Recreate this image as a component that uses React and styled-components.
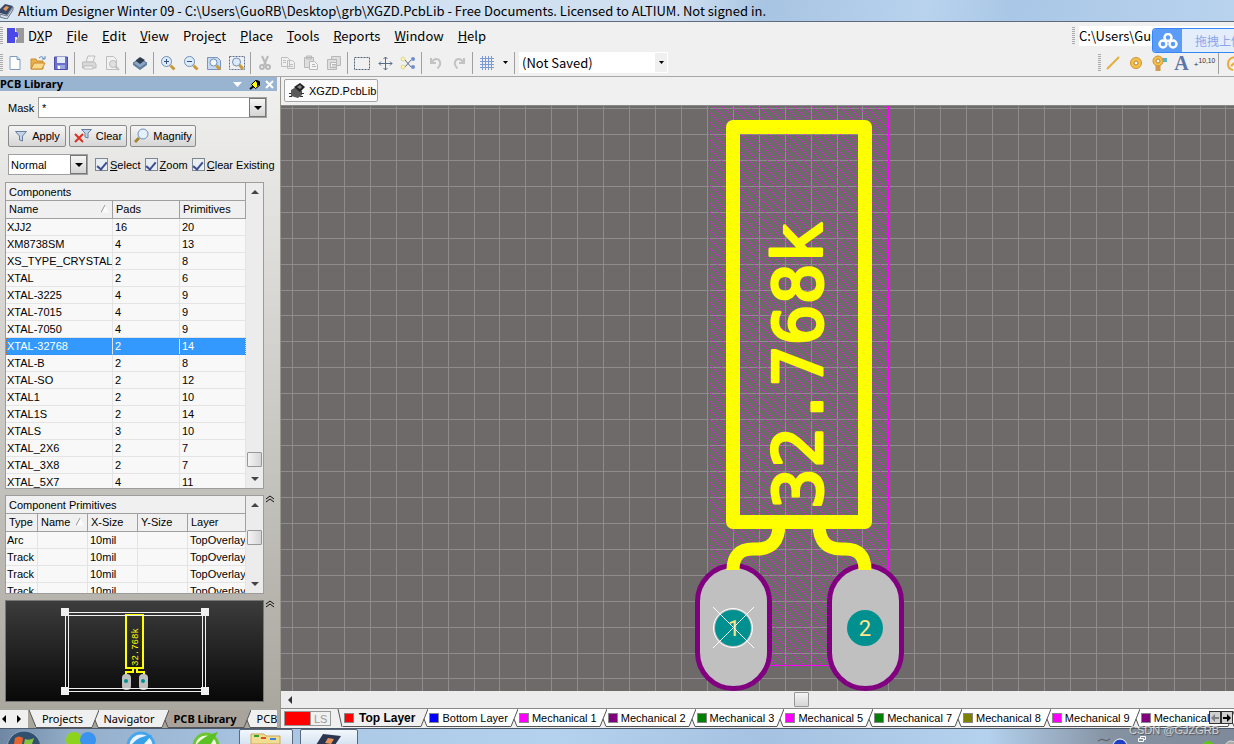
import { Fragment } from 'react';
import styled, { createGlobalStyle, css } from 'styled-components';

const MENUS = [
  ['D', 'X', 'P'],
  ['', 'F', 'ile'],
  ['', 'E', 'dit'],
  ['', 'V', 'iew'],
  ['Proje', 'c', 't'],
  ['', 'P', 'lace'],
  ['', 'T', 'ools'],
  ['', 'R', 'eports'],
  ['', 'W', 'indow'],
  ['', 'H', 'elp'],
];

const COMPONENTS = [
  ['XJJ2', 16, 20],
  ['XM8738SM', 4, 13],
  ['XS_TYPE_CRYSTAL', 2, 8],
  ['XTAL', 2, 6],
  ['XTAL-3225', 4, 9],
  ['XTAL-7015', 4, 9],
  ['XTAL-7050', 4, 9],
  ['XTAL-32768', 2, 14],
  ['XTAL-B', 2, 8],
  ['XTAL-SO', 2, 12],
  ['XTAL1', 2, 10],
  ['XTAL1S', 2, 14],
  ['XTALS', 3, 10],
  ['XTAL_2X6', 2, 7],
  ['XTAL_3X8', 2, 7],
  ['XTAL_5X7', 4, 11],
];

const PRIMITIVES = ['Arc', 'Track', 'Track', 'Track'];

const LAYERS = [
  ['Top Layer', '#ff0000'],
  ['Bottom Layer', '#0000ff'],
  ['Mechanical 1', '#ff00ff'],
  ['Mechanical 2', '#800080'],
  ['Mechanical 3', '#008000'],
  ['Mechanical 5', '#ff00ff'],
  ['Mechanical 7', '#008000'],
  ['Mechanical 8', '#808000'],
  ['Mechanical 9', '#ff00ff'],
  ['Mechanical 10', '#800080'],
];

/* Drawings of the toolbar buttons, on a 16px grid */
const ICONS = {
  new: (
    <>
      <path d="M3 1.5h7l3 3v10H3z" fill="#fff" stroke="#7f9cc0" />
      <path d="M10 1.5v3h3" fill="#c5d8ee" stroke="#7f9cc0" />
    </>
  ),
  open: (
    <>
      <path d="M1 14V4h5l1 2h6v8z" fill="#e9b04e" stroke="#c98b2c" />
      <path d="M1 14l3-6h11l-3 6z" fill="#fbd98a" stroke="#c98b2c" />
      <path d="M9 3q3-3 5 1M12 4h3V1" fill="none" stroke="#5d86bd" />
    </>
  ),
  save: (
    <>
      <path d="M1.500 2h13v12.500h-13z" fill="#6a70cc" stroke="#494fa8" />
      <path d="M4 2h8v6H4z" fill="#e6edfa" />
      <path d="M4 10h8v4H4z" fill="#9aa7e0" />
      <path d="M5 11h2v3H5z" fill="#fff" />
    </>
  ),
  print: (
    <g fill="#f2f2f2" stroke="#bcbcbc">
      <path d="M5 7l2-6h7l-2 6z" />
      <path d="M1.500 7h12l1.500 2v4H1.500z" fill="#d8d8d8" />
      <path d="M3 11h9v3H3z" />
    </g>
  ),
  preview: (
    <g fill="#f2f2f2" stroke="#bdbdbd">
      <path d="M2.500 1.500h7l3 3v10h-10z" />
      <circle cx="9" cy="9" r="3.500" fill="#e0e0e0" />
      <path d="M11.500 11.500l3.500 3.500" strokeWidth="2" />
    </g>
  ),
  chip: (
    <>
      <path d="M1 8l7-4 7 4-7 5z" fill="#8ba6c4" stroke="#5c7691" />
      <path d="M1 8v2l7 5 7-5V8l-7 5z" fill="#5e7d9f" />
      <path d="M3.500 5.500L8 2l5 3-5 4z" fill="#2e3d4e" />
    </>
  ),
  zoomIn: (
    <>
      <circle cx="6.500" cy="6.500" r="5" fill="#dcebfa" stroke="#6f8fb8" />
      <path d="M4 6.500h5M6.500 4v5" stroke="#33507e" />
      <path d="M10.500 10.500l4 4" stroke="#c99a3a" strokeWidth="3" />
    </>
  ),
  zoomOut: (
    <>
      <circle cx="6.500" cy="6.500" r="5" fill="#dcebfa" stroke="#6f8fb8" />
      <path d="M4 6.500h5" stroke="#33507e" />
      <path d="M10.500 10.500l4 4" stroke="#c99a3a" strokeWidth="3" />
    </>
  ),
  zoomFit: (
    <>
      <path d="M1.500 2.500h10l3 3v9h-13z" fill="#c7daf2" stroke="#7895c4" />
      <circle cx="7.500" cy="7.500" r="3.500" fill="#f3f8fd" stroke="#6f8fb8" />
      <path d="M10.500 10.500l3.500 4" stroke="#c99a3a" strokeWidth="3" />
    </>
  ),
  zoomArea: (
    <>
      <path d="M.5 1.500h15v13H.5z" fill="none" stroke="#5b7093" strokeDasharray="2 1" />
      <circle cx="7.500" cy="7" r="4" fill="#dcebfa" stroke="#6f8fb8" />
      <path d="M10.500 10l3.500 4" stroke="#c99a3a" strokeWidth="3" />
    </>
  ),
  cut: (
    <g fill="none" stroke="#b9b9b9" strokeWidth="2">
      <path d="M5 1l4 9M11 1L7 10" />
      <circle cx="5" cy="12" r="2" />
      <circle cx="11" cy="12" r="2" />
    </g>
  ),
  copy: (
    <g fill="#f0f0f0" stroke="#bebebe">
      <path d="M1.500 2.500h6l2 2v7h-8zM7.500 5.500h5l2 2v6h-7z" />
      <path d="M3 5.500h3M3 7.500h3M9 9.500h4M9 11.500h4" />
    </g>
  ),
  paste: (
    <g fill="#dedede" stroke="#b8b8b8">
      <path d="M1.500 2.500h9v10h-9zM3.500 1h5v3h-5z" />
      <path d="M6.500 6.500h5l3 3v5h-8z" fill="#f4f4f4" />
      <path d="M9 9.500h3M9 11.500h4" />
    </g>
  ),
  pasteArray: (
    <g fill="#dedede" stroke="#b8b8b8">
      <path d="M5.500 1.500h9v9h-9z" />
      <path d="M1.500 4.500h9v10h-9z" />
      <path d="M4.500 7.500h6v5h-6z" fill="#f4f4f4" />
      <path d="M6 9.500h4M6 11h4" />
    </g>
  ),
  select: <path d="M.5 2.500h15v12H.5z" fill="none" stroke="#4f6076" strokeDasharray="2 1" />,
  move: <path d="M8.500 2v13M2 8.500h13M6.500 4l2-2 2 2M6.500 13l2 2 2-2M4 6.500l-2 2 2 2M13 6.500l2 2-2 2" fill="none" stroke="#5b6c86" />,
  deselect: (
    <>
      <path d="M5 5l6 7M5 12l6-7" stroke="#5b6c86" />
      <circle cx="3" cy="4" r="2" fill="#fdf6b4" stroke="#ddd58a" />
      <circle cx="3" cy="12" r="2" fill="#fdf6b4" stroke="#ddd58a" />
      <circle cx="13" cy="4" r="2" fill="#6d8fd0" />
      <circle cx="13" cy="12" r="2" fill="#6d8fd0" />
    </>
  ),
  undo: <path d="M3 3v5h5M3.500 7.500q3-5 7-3 4 4-1 9" fill="none" stroke="#c2c2c2" strokeWidth="2" />,
  redo: <path d="M13 3v5H8M12.500 7.500q-3-5-7-3-4 4 1 9" fill="none" stroke="#c2c2c2" strokeWidth="2" />,
  grid: <path d="M1 3.500h14M1 6.500h14M1 9.500h14M1 12.500h14M3.500 1v14M6.500 1v14M9.500 1v14M12.500 1v14" stroke="#7b9ad6" />,
  line: <path d="M2 14L14 2" stroke="#e6ae3a" strokeWidth="2" />,
  pad: (
    <>
      <circle cx="8" cy="8" r="5.500" fill="#f6c04b" stroke="#cc9433" />
      <circle cx="8" cy="8" r="2" fill="#fff" stroke="#b9822d" />
    </>
  ),
  via: (
    <>
      <path d="M8 3h8v4H8z" fill="#58b4cf" />
      <path d="M4.500 9h5v7h-5z" fill="#d49a4b" />
      <circle cx="7" cy="6" r="5" fill="#f6c04b" stroke="#cc9433" />
      <circle cx="7" cy="6" r="2" fill="#fff" stroke="#b9822d" />
    </>
  ),
  arc: <path d="M15 2Q3 1 3 9q0 5 5 6M6 11l8-7" fill="none" stroke="#eda93a" strokeWidth="2" />,
};

const TOOLS = [
  ['new', 'open', 'save'],
  ['print', 'preview'],
  ['chip'],
  ['zoomIn', 'zoomOut', 'zoomFit', 'zoomArea'],
  ['cut', 'copy', 'paste', 'pasteArray'],
  ['select', 'move', 'deselect'],
  ['undo', 'redo'],
];

function Icon({ name }) {
  return (
    <svg width="16" height="16" viewBox="0 0 16 16" aria-hidden="true">
      {ICONS[name]}
    </svg>
  );
}

function Caret({ up, color = '#000' }) {
  return (
    <svg width="8" height="4" viewBox="0 0 8 4" aria-hidden="true">
      <path d={up ? 'M0 4l4-4 4 4z' : 'M0 0l4 4 4-4z'} fill={color} />
    </svg>
  );
}

function SmallCaret() {
  return (
    <svg width="5" height="3" viewBox="0 0 5 3" aria-hidden="true">
      <path d="M0 0h5L2.500 3z" fill="#000" />
    </svg>
  );
}

/* The slanted edge shared by two neighbouring tabs */
function Slant({ left, right }) {
  return (
    <SlantSvg viewBox="0 0 10 18" aria-hidden="true">
      <path d="M0 0h10L3 18H0z" fill={left} />
      <path d="M10 0v18H9L6 10z" fill={right} />
      <path d="M10 0L3 17.500H0M6 10l3 7.500h1" fill="none" stroke="#555" />
    </SlantSvg>
  );
}

function Sort() {
  return (
    <SortSvg viewBox="0 0 8 8" aria-hidden="true">
      <path d="M0 7.500L4 0l4 7.500z" fill="#fafafa" />
      <path d="M0 7.500L4 0" stroke="#999" />
    </SortSvg>
  );
}

function Collapse() {
  return (
    <svg width="10" height="8" viewBox="0 0 10 8" aria-hidden="true">
      <path d="M1 4l4-3 4 3M1 7l4-3 4 3" fill="none" stroke="#111" />
    </svg>
  );
}

function Scroller({ thumbTop }) {
  return (
    <ScrollTrack>
      <Caret up color="#444" />
      <ScrollThumb $top={thumbTop} />
      <ScrollEnd>
        <Caret color="#444" />
      </ScrollEnd>
    </ScrollTrack>
  );
}

function LibraryPanel() {
  return (
    <Panel>
      <PanelHeader>
        <PanelTitle>PCB Library</PanelTitle>
        <svg width="42" height="13" viewBox="0 0 42 13" aria-hidden="true">
          <path d="M1 4h9L5.500 9z" fill="#fff" />
          <path d="M18 11l4-3" stroke="#000" strokeWidth="2" />
          <path d="M19.500 6.500l4-4 4 1v4l-4 3z" fill="#ff0" stroke="#000" />
          <path d="M23 2l4 1v4l-2 2v-4z" fill="#000" />
          <path d="M34 3l7 7M41 3l-7 7" stroke="#fff" strokeWidth="2" />
        </svg>
      </PanelHeader>
      <PanelBody>
        <Row>
          <Label htmlFor="mask">Mask</Label>
          <MaskBox>
            <MaskInput id="mask" defaultValue="*" />
            <DropButton aria-label="Mask history">
              <Caret />
            </DropButton>
          </MaskBox>
        </Row>
        <ButtonRow>
          <PushButton $wide={58}>
            <svg width="14" height="14" viewBox="0 0 14 14" aria-hidden="true">
              <path d="M1.500 2.500h11L8.500 7v5l-3-1V7z" fill="#c3d3e8" stroke="#667f9f" />
            </svg>
            Apply
          </PushButton>
          <PushButton $wide={58}>
            <svg width="18" height="16" viewBox="0 0 18 16" aria-hidden="true">
              <path d="M7.500 1.500h10L14 5v5l-3-1V5z" fill="#c3d3e8" stroke="#667f9f" />
              <path d="M1 6l8 8M9 6l-8 8" stroke="#e02f1e" strokeWidth="2" />
            </svg>
            Clear
          </PushButton>
          <PushButton $wide={66}>
            <svg width="15" height="16" viewBox="0 0 15 16" aria-hidden="true">
              <path d="M5 10l-4 4" stroke="#a8842c" strokeWidth="3" />
              <circle cx="9" cy="6" r="5" fill="#e4f1fb" stroke="#7090bd" />
            </svg>
            Magnify
          </PushButton>
        </ButtonRow>
        <Row>
          <ModeBox>
            <ModeSelect aria-label="Filter mode">
              <option>Normal</option>
            </ModeSelect>
            <DropFace>
              <Caret />
            </DropFace>
          </ModeBox>
          {[
            ['S', 'elect'],
            ['Z', 'oom'],
            ['C', 'lear Existing'],
          ].map(([key, rest]) => (
            <Check key={rest}>
              <CheckInput type="checkbox" defaultChecked />
              <span>
                <u>{key}</u>
                {rest}
              </span>
            </Check>
          ))}
        </Row>
      </PanelBody>

      <ListBox $grow>
        <ListMain>
          <Caption>Components</Caption>
          <Table>
            <colgroup>
              <Col $width={107} />
              <Col $width={67} />
              <col />
            </colgroup>
            <thead>
              <tr>
                <Th>
                  Name
                  <Sort />
                </Th>
                <Th>Pads</Th>
                <Th>Primitives</Th>
              </tr>
            </thead>
            <tbody>
              {COMPONENTS.map(([name, pads, primitives]) => (
                <Tr key={name} $selected={name === 'XTAL-32768'}>
                  <Td>{name}</Td>
                  <Td>{pads}</Td>
                  <Td>{primitives}</Td>
                </Tr>
              ))}
            </tbody>
          </Table>
        </ListMain>
        <Scroller thumbTop={258} />
      </ListBox>

      <Section>
        <ListBox $height={99}>
          <ListMain>
            <Caption>Component Primitives</Caption>
            <Table>
              <colgroup>
                <Col $width={32} />
                <Col $width={50} />
                <Col $width={50} />
                <Col $width={50} />
                <col />
              </colgroup>
              <thead>
                <tr>
                  <Th>Type</Th>
                  <Th>
                    Name
                    <Sort />
                  </Th>
                  <Th>X-Size</Th>
                  <Th>Y-Size</Th>
                  <Th>Layer</Th>
                </tr>
              </thead>
              <tbody>
                {PRIMITIVES.map((type, i) => (
                  <Tr key={i}>
                    <Td>{type}</Td>
                    <Td />
                    <Td>10mil</Td>
                    <Td />
                    <Td>TopOverlay</Td>
                  </Tr>
                ))}
              </tbody>
            </Table>
          </ListMain>
          <Scroller thumbTop={23} />
        </ListBox>
        <Collapse />
      </Section>

      <Section>
        <Preview>
          <svg width="257" height="101" viewBox="0 0 257 101" aria-hidden="true">
            <g fill="none" stroke="#ff0" strokeWidth="2">
              <path d="M120 14h17v53h-17z" />
              <path d="M127 67v4h-7v4M131 67v4h7v4" />
            </g>
            <g fill="#c0c0c0">
              <rect x="116" y="73" width="9" height="16" rx="4" />
              <rect x="133" y="73" width="9" height="16" rx="4" />
            </g>
            <circle cx="120" cy="80" r="2" fill="#009090" />
            <circle cx="137" cy="80" r="2" fill="#009090" />
            <PreviewText transform="translate(132 65) rotate(-90)">32.768k</PreviewText>
            <path
              d="M59.500 11.500h140v79h-140zM62.500 14.500h134v73h-134z"
              fill="none"
              stroke="#f0f0f0"
            />
            <path d="M55 7h8v8h-8zM195 7h8v8h-8zM55 86h8v8h-8zM195 86h8v8h-8z" fill="#f0f0f0" />
          </svg>
        </Preview>
        <Collapse />
      </Section>

      <PanelTabs>
        <TabArrows>
          <svg width="24" height="8" viewBox="0 0 24 8" aria-hidden="true">
            <path d="M6 0v8L2 4zM17 0v8l4-4z" fill="#000" />
          </svg>
        </TabArrows>
        <svg width="8" height="17" viewBox="0 0 8 17" aria-hidden="true">
          <path d="M1 0l7 17V0z" fill="#f0f0f0" />
          <path d="M1 0l7 17" stroke="#555" />
        </svg>
        <PanelTab $width={53}>Projects</PanelTab>
        <Slant left="#f0f0f0" right="#f0f0f0" />
        <PanelTab $width={60}>Navigator</PanelTab>
        <Slant left="#f0f0f0" right="#a9a39b" />
        <PanelTab $width={72} $active>
          PCB Library
        </PanelTab>
        <Slant left="#a9a39b" right="#f0f0f0" />
        <PanelTab $width={32}>PCB</PanelTab>
      </PanelTabs>
    </Panel>
  );
}

// keep-out hatching of the body area, one 45 degree stroke every 9px
const HATCH = Array.from({ length: 84 }, (_, i) => `M428.500 ${i * 9 - 183.5}l180 180`).join('');

function Board() {
  // snap the 25.93px grid to whole pixels so that the lines stay crisp
  const step = (first, i) => Math.round(first + i * 25.93) + 0.5;
  return (
    <BoardSvg role="img" aria-label="XTAL-32768 footprint">
      <defs>
        <clipPath id="body">
          <rect x="428" y="0" width="180" height="559" />
        </clipPath>
      </defs>
      <g stroke="#8f8c90" shapeRendering="crispEdges">
        {Array.from({ length: 80 }, (_, i) => (
          <line key={`v${i}`} x1={step(11, i)} x2={step(11, i)} y1="0" y2="100%" />
        ))}
        {Array.from({ length: 50 }, (_, i) => (
          <line key={`h${i}`} y1={step(2, i)} y2={step(2, i)} x1="0" x2="100%" />
        ))}
      </g>

      <g fill="none" stroke="#ff00ff" shapeRendering="crispEdges">
        <path d={HATCH} clipPath="url(#body)" strokeWidth="0.7" />
        <path d="M428.500 0v559.500H608" />
        <path d="M608 0v559" strokeWidth="2" />
      </g>

      <g fill="#c0c0c0" stroke="#800080" strokeWidth="5">
        <rect x="416.500" y="459.500" width="72" height="123" rx="36" />
        <rect x="548.500" y="459.500" width="72" height="123" rx="36" />
      </g>
      <g fill="none" stroke="#ff0" strokeWidth="14" strokeLinejoin="round">
        <path d="M452 21h132v395H452z" />
        <path d="M498 418q0 25-22 25h-4q-20 0-20 21" strokeWidth="13" />
        <path d="M538 418q0 25 22 25h4q20 0 20 21" strokeWidth="13" />
      </g>
      <FootprintText transform="translate(541 403) rotate(-90)">32.768k</FootprintText>

      <circle cx="452" cy="522" r="18" fill="#009090" />
      <circle cx="584" cy="522" r="18" fill="#009090" />
      <PadText x="453" y="530">
        1
      </PadText>
      <PadText x="584" y="530">
        2
      </PadText>
      <g fill="none" stroke="#fff">
        <circle cx="452" cy="522" r="19.500" />
        <path d="M432 501l41 41M473 501l-41 41" />
      </g>
    </BoardSvg>
  );
}

export default function App() {
  return (
    <Shell>
      <GlobalStyle />
      <TitleBar>
        <svg width="14" height="16" viewBox="0 0 14 16" aria-hidden="true">
          <path d="M0 6l5-5 8 2-6 9-7-2z" fill="#3b4868" />
          <path d="M3 6l3-3 3 1-3 4z" fill="#e69a5c" />
          <path d="M0 11l7 2 6-9v3l-6 9-7-2z" fill="#d8dfe8" stroke="#66748a" />
        </svg>
        <Title>
          Altium Designer Winter 09 - C:\Users\GuoRB\Desktop\grb\XGZD.PcbLib - Free
          Documents. Licensed to ALTIUM. Not signed in.
        </Title>
      </TitleBar>

      <MenuBar>
        <Grip $space={4} />
        <svg width="17" height="15" viewBox="0 0 17 15" aria-hidden="true">
          <path d="M0 0h8v4h2v-1q3 4 0 8V9H8v6H0z" fill="#4a48e8" />
          <path d="M9 0h8v15H9v-3q6-4 0-9z" fill="#9a9a9a" />
        </svg>
        <MenuList>
          {MENUS.map(([pre, key, post]) => (
            <MenuItem key={pre + key + post}>
              {pre}
              <u>{key}</u>
              {post}
            </MenuItem>
          ))}
        </MenuList>
        <PathGroup>
          <Grip $space={4} />
          <PathInput aria-label="Document path" defaultValue="C:\Users\GuoRB\Desktop" />
        </PathGroup>
      </MenuBar>

      <ToolBar>
        <Grip />
        {TOOLS.map((group) => (
          <Fragment key={group[0]}>
            {group.map((name) => (
              <Tool key={name} aria-label={name}>
                <Icon name={name} />
              </Tool>
            ))}
            <Divider />
          </Fragment>
        ))}
        <Tool aria-label="grid">
          <Icon name="grid" />
        </Tool>
        <Tool $narrow aria-label="grid menu">
          <SmallCaret />
        </Tool>
        <Divider />
        <SavedBox>
          <SavedSelect aria-label="Saved view">
            <option>(Not Saved)</option>
          </SavedSelect>
          <SavedArrow>
            <SmallCaret />
          </SavedArrow>
        </SavedBox>
        <DrawTools>
          <Grip />
          {['line', 'pad', 'via'].map((name) => (
            <Tool key={name} aria-label={name}>
              <Icon name={name} />
            </Tool>
          ))}
          <Tool aria-label="text">
            <Letter>A</Letter>
          </Tool>
          <Tool aria-label="coordinate">
            <Coordinate>
              +<sup>10,10</sup>
            </Coordinate>
          </Tool>
          <Divider />
          <Tool aria-label="arc">
            <Icon name="arc" />
          </Tool>
        </DrawTools>
      </ToolBar>

      <Work>
        <LibraryPanel />
        <Editor>
          <DocBar>
            <DocTab>
              <svg width="17" height="16" viewBox="0 0 17 16" aria-hidden="true">
                <path d="M2 7l5-3 6 4v4l-4 3-7-2z" fill="#5a5a5a" />
                <path d="M5 4l6-4 5 4-5 5z" fill="#222" />
                <path d="M8 4l3-2 2 2-2 2z" fill="#888" />
                <path d="M0 10.500h2M0 13.500h3M12 10.500h3M11 13.500h3" stroke="#333" />
              </svg>
              XGZD.PcbLib
            </DocTab>
          </DocBar>
          <Board />
          <HScroll>
            <svg width="5" height="8" viewBox="0 0 5 8" aria-hidden="true">
              <path d="M5 0v8L1 4z" fill="#333" />
            </svg>
            <HThumb />
          </HScroll>
          <LayerBar>
            <LayerSet>
              <LayerColor />
              LS
            </LayerSet>
            <svg width="6" height="19" viewBox="0 0 6 19" aria-hidden="true">
              <path d="M1 0l4 18" stroke="#555" />
            </svg>
            {LAYERS.map(([name, color], i) => (
              <Fragment key={name}>
                <LayerTab $active={i === 0}>
                  <Swatch $color={color} />
                  {name}
                </LayerTab>
                <Slant left={i === 0 ? '#f0f0f0' : '#fff'} right="#fff" />
              </Fragment>
            ))}
            <LayerNav>
              <NavButton aria-label="Previous layers" disabled>
                <svg width="8" height="8" viewBox="0 0 8 8">
                  <path d="M0 4l4-4v3h4v2H4v3z" fill="#808080" />
                </svg>
              </NavButton>
              <NavButton aria-label="Next layers">
                <svg width="8" height="8" viewBox="0 0 8 8">
                  <path d="M8 4L4 0v3H0v2h4v3z" fill="#000" />
                </svg>
              </NavButton>
            </LayerNav>
          </LayerBar>
        </Editor>
      </Work>

      <TaskBar>
        <svg width="232" height="15" viewBox="0 0 232 15" aria-hidden="true">
          <circle cx="24" cy="19" r="17" fill="#31506f" stroke="#8fa9c4" />
          <path d="M15 9q4-3 8 0l-1 6h-8z" fill="#e8632c" />
          <path d="M25 10q4 2 9-1l-2 6h-8z" fill="#86c440" />
          <circle cx="74" cy="11" r="8" fill="#8dd31c" />
          <circle cx="88" cy="11" r="8" fill="#3a93ee" />
          <circle cx="141" cy="17" r="13" fill="#eaf5ff" stroke="#4aa6ea" strokeWidth="3" />
          <path d="M132 15q6-8 20-9l-8 9z" fill="#37a0ea" />
          <circle cx="206" cy="17" r="12" fill="#f2fbe8" stroke="#6cc531" strokeWidth="3" />
          <path d="M197 15q6-8 21-12l-7 12z" fill="#5bc022" />
        </svg>
        <TaskButton aria-label="Explorer" $width={54}>
          <svg width="32" height="11" viewBox="0 0 32 11" aria-hidden="true">
            <path d="M1 1h13l2 2h14v8H1z" fill="#f2dc92" stroke="#c7a956" />
            <path d="M4 2h5v2H4z" fill="#2aa52a" />
            <path d="M11 4h5v2h-5z" fill="#e04a2a" />
            <path d="M20 5h6v2h-6z" fill="#3584d4" />
          </svg>
        </TaskButton>
        <TaskButton aria-label="Altium Designer" $width={58}>
          <svg width="28" height="12" viewBox="0 0 28 12" aria-hidden="true">
            <path d="M8 1l18 2-6 9H1z" fill="#2c3550" />
            <path d="M13 5l6 1-3 5-6-1z" fill="#e8935a" />
          </svg>
        </TaskButton>
        <Tray width="140" height="15" viewBox="0 0 140 15" aria-hidden="true">
          <path d="M4 12q4-3 6-1t6-1" fill="none" stroke="#555" />
          <circle cx="26" cy="17" r="7" fill="#1d3fc4" stroke="#fff" />
          <path d="M44.500 12.500v-3h5v3zM46.500 9.500v-2h5v3h-2" fill="none" stroke="#fff" />
          <circle cx="114" cy="18" r="6" fill="#63c51c" />
          <circle cx="137" cy="18" r="6" fill="#aaa" stroke="#ddd" />
        </Tray>
      </TaskBar>

      <UploadPill>
        <PillLogo>
          <svg width="20" height="16" viewBox="0 0 20 16" aria-hidden="true">
            <g fill="none" stroke="#fff" strokeWidth="2.500">
              <circle cx="10" cy="4.500" r="3.500" />
              <circle cx="5" cy="11" r="3.500" />
              <circle cx="15" cy="11" r="3.500" />
            </g>
          </svg>
        </PillLogo>
        <PillText>拖拽上传</PillText>
      </UploadPill>
      <Watermark>CSDN @GJZGRB</Watermark>
    </Shell>
  );
}

const GlobalStyle = createGlobalStyle`
  * {
    box-sizing: border-box;
  }

  body {
    margin: 0;
    overflow: hidden;
    color: #000;
    font: 11px/16px 'Liberation Sans', Arial, sans-serif;
  }

  button, input, select {
    margin: 0;
    padding: 0;
    border: 0;
    border-radius: 0;
    color: inherit;
    font: inherit;
  }

  svg {
    display: block;
    flex: none;
  }
`;

const uiFont = css`
  font-family: 'Noto Sans', 'Open Sans', sans-serif;
`;

const menuFont = css`
  font-family: 'Noto Sans CJK SC', 'Noto Sans', sans-serif;
  font-size: 13px;
`;

const Shell = styled.div`
  position: relative;
  display: flex;
  flex-direction: column;
  height: 100vh;
  overflow: hidden;
  background: #f0f0f0;
`;

const TitleBar = styled.header`
  display: flex;
  align-items: center;
  gap: 4px;
  height: 22px;
  flex: none;
  border-bottom: 1px solid #5f6b7c;
  background: linear-gradient(100deg, #d9e6f3 0%, #cfdff0 55%, #a7c4e2 62%, #b9d3ee 75%, #a9c7e6 82%, #b9d3ee 100%);
`;

const Title = styled.h1`
  ${menuFont}
  margin: 0;
  font-weight: 400;
  white-space: nowrap;
`;

const MenuBar = styled.nav`
  display: flex;
  align-items: center;
  height: 27px;
  flex: none;
`;

const Grip = styled.span`
  width: 3px;
  height: 17px;
  margin-right: ${({ $space = 0 }) => $space}px;
  flex: none;
  background: repeating-linear-gradient(#aaa 0 1px, transparent 1px 2px);
`;

const MenuList = styled.div`
  display: flex;
  gap: 14px;
  margin-left: 4px;
`;

const MenuItem = styled.button`
  ${menuFont}
  background: none;
  white-space: nowrap;
`;

const PathGroup = styled.div`
  display: flex;
  align-items: center;
  width: 162px;
  margin-left: auto;
`;

const PathInput = styled.input`
  ${menuFont}
  flex: 1;
  min-width: 0;
  height: 20px;
  background: #fff;
`;

const ToolBar = styled.div`
  display: flex;
  align-items: center;
  height: 28px;
  flex: none;
  border-bottom: 1px solid #a8a8a8;
`;

const Tool = styled.button`
  display: flex;
  align-items: center;
  justify-content: center;
  width: ${({ $narrow }) => ($narrow ? 14 : 23)}px;
  height: 22px;
  flex: none;
  background: none;
`;

const Divider = styled.span`
  width: 1px;
  height: 22px;
  margin: 0 2px;
  flex: none;
  background: #a0a0a0;
`;

const SavedBox = styled.div`
  display: flex;
  width: 149px;
  height: 21px;
  margin-left: 2px;
  background: #fff;
`;

const SavedSelect = styled.select`
  ${menuFont}
  flex: 1;
  padding-left: 3px;
  appearance: none;
  background: none;
`;

const SavedArrow = styled.span`
  display: flex;
  align-items: center;
  justify-content: center;
  width: 12px;
  margin: 1px;
  background: #f0f0f0;
`;

const DrawTools = styled.div`
  display: flex;
  align-items: center;
  width: 136px;
  margin-left: auto;
  overflow: hidden;
`;

const Letter = styled.span`
  color: #5d74a8;
  font: 700 20px/20px 'Liberation Serif', serif;
`;

const Coordinate = styled.span`
  color: #333;
  font-size: 8px;
  line-height: 12px;
  white-space: nowrap;
`;

const Work = styled.main`
  display: flex;
  flex: 1;
  min-height: 0;
`;

const Panel = styled.aside`
  display: flex;
  flex-direction: column;
  width: 281px;
  flex: none;
  border-right: 1px solid #98968f;
  background: linear-gradient(#f1f1f0, #a8a59d);
`;

const PanelHeader = styled.header`
  display: flex;
  align-items: center;
  justify-content: space-between;
  height: 14px;
  margin-right: 3px;
  padding-right: 3px;
  flex: none;
  background: #99b4d1;
`;

const PanelTitle = styled.h2`
  ${uiFont}
  margin: 0;
  font-size: 11px;
  line-height: 14px;
`;

const PanelBody = styled.div`
  display: flex;
  flex-direction: column;
  gap: 7px;
  padding: 6px 0 7px 8px;
`;

const Row = styled.div`
  display: flex;
  align-items: center;
  gap: 5px;
`;

const ButtonRow = styled.div`
  display: flex;
  gap: 3px;
`;

const Label = styled.label`
  width: 25px;
`;

const MaskBox = styled.div`
  display: flex;
  width: 229px;
  height: 21px;
  border: 1px solid #a0a0a0;
`;

const MaskInput = styled.input`
  flex: 1;
  min-width: 0;
  padding-left: 3px;
  background: #fff;
`;

const dropFace = css`
  display: flex;
  align-items: center;
  justify-content: center;
  width: 17px;
  border: 1px solid #777;
  background: linear-gradient(#f6f6f6, #d4d4d4);
`;

const DropButton = styled.button`
  ${dropFace}
`;

const PushButton = styled.button`
  display: flex;
  align-items: center;
  justify-content: center;
  gap: 4px;
  width: ${({ $wide }) => $wide}px;
  height: 22px;
  border: 1px solid #8b8b8b;
  border-radius: 2px;
  background: linear-gradient(#f5f5f5, #e6e6e6 50%, #d6d6d6);
`;

const ModeBox = styled.div`
  display: flex;
  width: 80px;
  height: 21px;
  flex: none;
  border: 1px solid #a0a0a0;
  background: #fff;
`;

const ModeSelect = styled.select`
  flex: 1;
  min-width: 0;
  padding-left: 2px;
  appearance: none;
  background: none;
`;

const DropFace = styled.span`
  ${dropFace}
`;

const Check = styled.label`
  display: flex;
  align-items: center;
  gap: 2px;
  margin-left: 2px;
  white-space: nowrap;

  & + & {
    margin-left: -1px;
  }
`;

const CheckInput = styled.input`
  display: grid;
  place-items: center;
  width: 13px;
  height: 13px;
  border: 1px solid #7f8790;
  appearance: none;
  background: #e9eef3;

  &:checked::after {
    width: 4px;
    height: 8px;
    border: solid #3b4f94;
    border-width: 0 2px 2px 0;
    content: '';
    transform: rotate(40deg);
  }
`;

const ListBox = styled.section`
  display: flex;
  width: 259px;
  margin-left: 5px;
  overflow: hidden;
  border: 1px solid #9c9c9c;
  background: #f8f8f8;
  ${({ $grow, $height }) => ($grow ? 'flex: 1; min-height: 0;' : `height: ${$height}px; flex: none;`)}
`;

const ListMain = styled.div`
  flex: 1;
  min-width: 0;
`;

const Caption = styled.h3`
  height: 18px;
  margin: 0;
  padding-left: 3px;
  border-right: 1px solid #a0a0a0;
  border-bottom: 1px solid #a0a0a0;
  background: #f0f0f0;
  font-size: 11px;
  font-weight: 400;
  line-height: 18px;
`;

const Table = styled.table`
  width: 100%;
  border-collapse: separate;
  border-spacing: 0;
  table-layout: fixed;
`;

const Col = styled.col`
  width: ${({ $width }) => $width}px;
`;

const Th = styled.th`
  height: 18px;
  padding: 0 3px;
  overflow: hidden;
  border-right: 1px solid #a0a0a0;
  border-bottom: 1px solid #a0a0a0;
  background: #f0f0f0;
  font-weight: 400;
  line-height: 17px;
  text-align: left;
  white-space: nowrap;
`;

const SortSvg = styled.svg`
  float: right;
  width: 8px;
  height: 8px;
  margin: 4px 0;
`;

const Td = styled.td`
  height: 17px;
  padding: 0 0 0 2px;
  overflow: hidden;
  border-right: 1px solid #e4e4e4;
  border-bottom: 1px solid #e4e4e4;
  line-height: 16px;
  white-space: nowrap;

  &:first-child {
    padding-left: 1px;
  }
`;

const Tr = styled.tr`
  ${({ $selected }) =>
    $selected &&
    css`
      background: #3399ff;
      color: #fff;
      outline: 1px dotted #c06a2a;
      outline-offset: -1px;

      ${Td} {
        border-bottom-color: #3399ff;
      }
    `}
`;

const ScrollTrack = styled.div`
  display: flex;
  flex-direction: column;
  align-items: center;
  width: 17px;
  padding: 7px 0;
  background: #ececec;
`;

const ScrollThumb = styled.span`
  width: 15px;
  height: 15px;
  margin-top: ${({ $top }) => $top}px;
  flex: none;
  border: 1px solid #979797;
  border-radius: 1px;
  background: linear-gradient(90deg, #f4f4f4, #d6d6d6);
`;

const ScrollEnd = styled.span`
  margin-top: auto;
`;

const Section = styled.div`
  display: flex;
  align-items: flex-start;
  gap: 1px;
  margin-top: 6px;
`;

const Preview = styled.div`
  width: 259px;
  height: 102px;
  margin-left: 5px;
  overflow: hidden;
  border: 1px solid #777;
  background: linear-gradient(#3c3c3c, #080808);
`;

const PreviewText = styled.text`
  fill: #ff0;
  font: 9px 'Liberation Mono', monospace;
`;

const PanelTabs = styled.div`
  display: flex;
  height: 18px;
  margin-top: 8px;
  margin-right: 3px;
  overflow: hidden;
  flex: none;
`;

const TabArrows = styled.span`
  display: flex;
  align-items: center;
  width: 28px;
  flex: none;
  background: #f0f0f0;
`;

const PanelTab = styled.button`
  ${uiFont}
  width: ${({ $width }) => $width}px;
  height: 18px;
  flex: none;
  border-bottom: 1px solid #555;
  background: ${({ $active }) => ($active ? '#a9a39b' : '#f0f0f0')};
  font-weight: ${({ $active }) => ($active ? 700 : 400)};
  line-height: 15px;
  white-space: nowrap;
`;

const SlantSvg = styled.svg`
  width: 10px;
  height: 18px;
`;

const Editor = styled.section`
  display: flex;
  flex-direction: column;
  flex: 1;
  min-width: 0;
`;

const DocBar = styled.div`
  height: 29px;
  padding: 2px 3px;
  flex: none;
  border-bottom: 1px solid #888;
`;

const DocTab = styled.button`
  display: flex;
  align-items: center;
  gap: 3px;
  height: 23px;
  padding: 0 1px 0 4px;
  border: 1px solid #a5a5a5;
  border-radius: 2px;
  background: #fbfbfb;
`;

const BoardSvg = styled.svg`
  width: 100%;
  height: 0;
  flex: 1;
  background: #6e6a6a;
`;

const FootprintText = styled.text`
  fill: #ff0;
  stroke: #ff0;
  stroke-linejoin: round;
  stroke-width: 3px;
  font: 68px 'DejaVu Sans Mono', monospace;
`;

const PadText = styled.text`
  fill: #ffe68c;
  font: 22px Roboto, sans-serif;
  text-anchor: middle;
`;

const HScroll = styled.div`
  display: flex;
  align-items: center;
  height: 17px;
  padding-left: 6px;
  flex: none;
  background: #ececec;
`;

const HThumb = styled.span`
  width: 15px;
  height: 15px;
  margin-left: 53%;
  border: 1px solid #979797;
  border-radius: 1px;
  background: linear-gradient(#f4f4f4, #d6d6d6);
`;

const LayerBar = styled.div`
  position: relative;
  display: flex;
  height: 20px;
  overflow: hidden;
  flex: none;
  border-top: 1px solid #888;
`;

const LayerSet = styled.span`
  display: flex;
  align-items: center;
  width: 47px;
  height: 15px;
  margin: 2px 6px 0 3px;
  flex: none;
  border: 1px solid #999;
  color: #999;
`;

const LayerColor = styled.span`
  width: 26px;
  height: 100%;
  margin-right: 3px;
  border-right: 1px solid #999;
  background: #ff0000;
`;

const LayerTab = styled.button`
  display: flex;
  align-items: center;
  gap: 3px;
  height: 18px;
  padding: 0 0 0 1px;
  flex: none;
  border-bottom: 1px solid #555;
  background: #fff;
  white-space: nowrap;
  ${({ $active }) =>
    $active &&
    css`
      gap: 5px;
      padding-right: 3px;
      background: #f0f0f0;
      font-size: 12px;
      font-weight: 700;
    `}
`;

const Swatch = styled.span`
  width: 10px;
  height: 10px;
  border: 1px solid #888;
  background: ${({ $color }) => $color};
`;

/* Lies over the tabs that run past the window edge */
const LayerNav = styled.div`
  position: absolute;
  top: 2px;
  right: 1px;
  display: flex;
`;

const NavButton = styled.button`
  display: flex;
  align-items: center;
  justify-content: center;
  width: 12px;
  height: 13px;
  border: 1px solid #333;
  background: #d0d0d0;
`;

const TaskBar = styled.footer`
  display: flex;
  height: 16px;
  overflow: hidden;
  flex: none;
  border-top: 1px solid #4c5a6b;
  background: linear-gradient(90deg, #6f87a3, #94aeca 6%, #a9c6e4 22%, #b4d1ee 45%, #a5c2e2 62%, #b4d1ee 80%, #8592a2 90%, #7e8a99);
`;

const TaskButton = styled.button`
  display: flex;
  justify-content: center;
  width: ${({ $width }) => $width}px;
  height: 20px;
  margin-left: 7px;
  padding-top: 3px;
  border: 1px solid #5a6878;
  border-radius: 2px;
  background: linear-gradient(#f2f7fc, #cfdeee);
`;

const Tray = styled.svg`
  margin-left: auto;
`;

const UploadPill = styled.div`
  position: absolute;
  top: 28px;
  right: 0;
  display: flex;
  width: 82px;
  height: 25px;
  overflow: hidden;
  border: 1px solid #3586f7;
  border-right: 0;
  border-radius: 4px 0 0 4px;
  background: #e4eefb;
`;

const PillLogo = styled.span`
  display: flex;
  align-items: center;
  justify-content: center;
  width: 29px;
  flex: none;
  background: #5a9cf8;
`;

const PillText = styled.span`
  margin-left: 13px;
  color: #8ba4ea;
  font: 12px/23px 'Noto Sans CJK SC', sans-serif;
  white-space: nowrap;
`;

const Watermark = styled.span`
  position: absolute;
  right: 15px;
  bottom: 6px;
  color: rgba(235, 235, 235, 0.8);
  text-shadow: 1px 1px 1px #555;
`;
